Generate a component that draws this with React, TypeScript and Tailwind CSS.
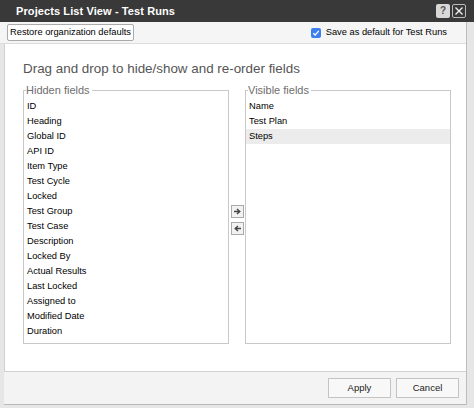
const hidden = [
  'ID',
  'Heading',
  'Global ID',
  'API ID',
  'Item Type',
  'Test Cycle',
  'Locked',
  'Test Group',
  'Test Case',
  'Description',
  'Locked By',
  'Actual Results',
  'Last Locked',
  'Assigned to',
  'Modified Date',
  'Duration',
];

const visible = ['Name', 'Test Plan', 'Steps'];

function FieldBox({ title, items, selected }: { title: string; items: string[]; selected?: string }) {
  return (
    <div className="relative w-[206px] h-[254px] border border-[#c8c8c8] pt-[8px]">
      <span className="absolute -top-[8px] left-[2px] bg-white pr-[2px] text-[11px] leading-[14px] text-[#6e6e6e]">
        {title}
      </span>
      <ul>
        {items.map((item) => (
          <li
            key={item}
            className={`h-[15px] px-[3px] text-[9.3px] leading-[15px] text-black ${item === selected ? 'bg-[#ececec]' : ''}`}
          >
            {item}
          </li>
        ))}
      </ul>
    </div>
  );
}

export default function App() {
  return (
    <div className="w-[474px] h-[408px] overflow-hidden bg-[#e6e6e6] font-['Liberation_Sans',Arial,sans-serif]">
      {/* Title bar */}
      <div className="h-[22px] bg-[#393939] flex items-center pl-[16px] pr-[8px]">
        <span className="text-[11px] font-bold text-white tracking-[0.1px]">Projects List View - Test Runs</span>
        <div className="ml-auto flex gap-[2px]">
          <span className="w-[14px] h-[14px] bg-[#d8d8d8] rounded-[2px] flex items-center justify-center text-[10px] font-bold text-[#555] leading-none">
            ?
          </span>
          <span className="w-[14px] h-[14px] border border-[#bbb] rounded-[2px] flex items-center justify-center">
            <svg width="10" height="10" viewBox="0 0 10 10">
              <path d="M1.5 1.5 L8.5 8.5 M8.5 1.5 L1.5 8.5" stroke="#eee" strokeWidth="1.4" />
            </svg>
          </span>
        </div>
      </div>

      <div className="w-[467px] border-r border-[#bdbdbd]">
        {/* Toolbar */}
        <div className="h-[22px] bg-[#f5f5f5] border-b border-[#dcdcdc] flex items-center pl-[7px] pr-[19px]">
          <button className="h-[17px] px-[2px] bg-white border border-[#aaa] rounded-[2px] text-[9.3px] leading-[15px] text-black">
            Restore organization defaults
          </button>
          <label className="ml-auto flex items-center gap-[5px] text-[9.3px] text-black">
            <span className="w-[10px] h-[10px] rounded-[2px] bg-[#3b7ff0] flex items-center justify-center">
              <svg width="8" height="8" viewBox="0 0 8 8">
                <path d="M1.3 4.2 L3.2 6 L6.8 1.8" fill="none" stroke="white" strokeWidth="1.3" />
              </svg>
            </span>
            Save as default for Test Runs
          </label>
        </div>

        {/* Content */}
        <div className="ml-[4px] h-[328px] bg-white border-l border-b border-[#d0d0d0] pl-[18px] pt-[18px]">
          <p className="text-[13.4px] leading-[14px] text-[#555]">Drag and drop to hide/show and re-order fields</p>
          <div className="mt-[14px] flex">
            <FieldBox title="Hidden fields" items={hidden} />
            <div className="w-[16px] flex flex-col items-center pt-[115px] gap-[4px]">
              <span className="w-[13px] h-[13px] border border-[#aaa] bg-[#f2f2f2] flex items-center justify-center">
                <svg width="9" height="9" viewBox="0 0 9 9">
                  <path d="M1 4.5 H6 M4 2 L6.8 4.5 L4 7" fill="none" stroke="#444" strokeWidth="1.4" />
                </svg>
              </span>
              <span className="w-[13px] h-[13px] border border-[#aaa] bg-[#f2f2f2] flex items-center justify-center">
                <svg width="9" height="9" viewBox="0 0 9 9">
                  <path d="M8 4.5 H3 M5 2 L2.2 4.5 L5 7" fill="none" stroke="#444" strokeWidth="1.4" />
                </svg>
              </span>
            </div>
            <FieldBox title="Visible fields" items={visible} selected="Steps" />
          </div>
        </div>

        {/* Footer */}
        <div className="ml-[4px] h-[33px] bg-[#f3f3f3] border-b border-[#b8b8b8] flex items-center justify-end gap-[5px] pr-[7px]">
          <button className="w-[63px] h-[20px] bg-[#f8f8f8] border border-[#c4c4c4] text-[9.5px] text-[#222]">Apply</button>
          <button className="w-[63px] h-[20px] bg-[#f8f8f8] border border-[#c4c4c4] text-[9.5px] text-[#222]">Cancel</button>
        </div>
      </div>
    </div>
  );
}
